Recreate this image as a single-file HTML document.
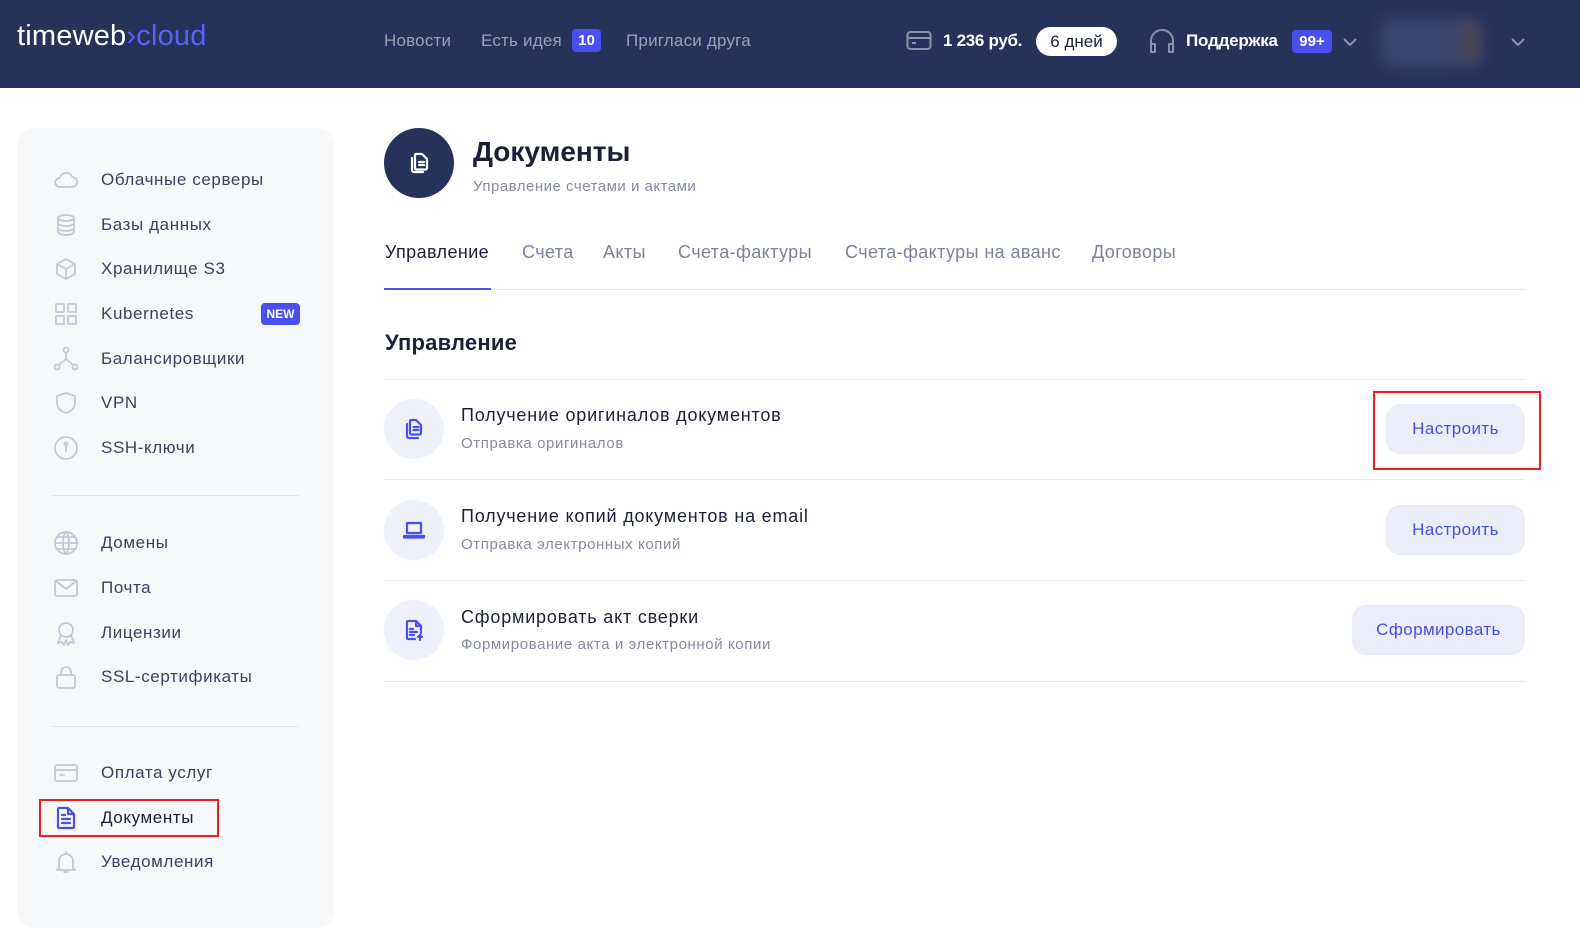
<!DOCTYPE html>
<html><head><meta charset="utf-8"><style>
*{margin:0;padding:0;box-sizing:border-box}
body{width:1580px;height:901px;overflow:hidden;background:#fff;font-family:"Liberation Sans",sans-serif;position:relative;color:#1c2036}
.abs{position:absolute}
.hdr{left:0;top:0;width:1580px;height:88px;background:#27325b}
.nav{color:#9aa0b8;font-size:17px;top:31px;letter-spacing:0.2px}
.badge{background:#4a50f0;color:#fff;border-radius:4px;font-weight:bold;font-size:15px;text-align:center}
.side{left:17px;top:128px;width:317px;height:800px;background:#f7f8fa;border-radius:18px}
.item{left:101px;font-size:17px;color:#3c4260;letter-spacing:0.6px}
.ic{left:53px;width:26px;height:26px}
.ic svg{width:26px;height:26px;fill:none;stroke:#c4c8d6;stroke-width:1.8;stroke-linecap:round;stroke-linejoin:round}
.div{left:52px;width:247px;height:1px;background:#e3e5ec}
.tab{top:242px;font-size:18px;color:#7c8299;letter-spacing:0.4px}
.hl{left:384px;width:1141px;height:1px;background:#e6e8ee}
.rc{left:384px;width:60px;height:60px;border-radius:50%;background:#eef0fb}
.rc svg{position:absolute;left:18px;top:18px;width:24px;height:24px;fill:none;stroke:#4a50f0;stroke-width:2.2;stroke-linecap:round;stroke-linejoin:round}
.rt{left:461px;font-size:18px;color:#1c2036;letter-spacing:0.8px}
.rs{left:461px;font-size:15px;color:#858aa0;letter-spacing:0.6px}
.btn{height:50px;border-radius:14px;background:#ebedfb;color:#4450e0;font-size:17px;text-align:center;line-height:50px;letter-spacing:0.4px}
.red{border:2px solid #ee1c24}
</style></head><body>
<div class="abs hdr"></div>
<div class="abs" style="left:17px;top:20px;font-size:29px;color:#fff;letter-spacing:0.2px">timeweb<span style="color:#5a62f6">›cloud</span></div>
<div class="abs nav" style="left:384px">Новости</div>
<div class="abs nav" style="left:481px">Есть идея</div>
<div class="abs badge" style="left:572px;top:29px;width:29px;height:23px;line-height:23px">10</div>
<div class="abs nav" style="left:626px">Пригласи друга</div>
<svg class="abs" style="left:906px;top:30px" width="26" height="22" viewBox="0 0 26 22"><rect x="1.5" y="2" width="23" height="17" rx="3" fill="none" stroke="#8a91ad" stroke-width="2"/><line x1="2" y1="8" x2="24" y2="8" stroke="#8a91ad" stroke-width="2"/><line x1="6" y1="13" x2="10" y2="13" stroke="#8a91ad" stroke-width="2"/></svg>
<div class="abs" style="left:943px;top:31px;color:#fff;font-size:17px;font-weight:bold;letter-spacing:-0.3px">1 236 руб.</div>
<div class="abs" style="left:1036px;top:27px;width:81px;height:29px;border-radius:15px;background:#fff;color:#1c2036;font-size:17px;text-align:center;line-height:29px">6 дней</div>
<svg class="abs" style="left:1148px;top:28px" width="28" height="26" viewBox="0 0 28 26"><path d="M3 22V13a11 11 0 0 1 22 0v9M3 16h4v8H3zM21 16h4v8h-4z" fill="none" stroke="#8a91ad" stroke-width="2" stroke-linejoin="round"/></svg>
<div class="abs" style="left:1186px;top:31px;color:#fff;font-size:17px;font-weight:bold;letter-spacing:-0.2px">Поддержка</div>
<div class="abs badge" style="left:1292px;top:30px;width:40px;height:23px;line-height:23px">99+</div>
<svg class="abs" style="left:1342px;top:37px" width="16" height="10"><path d="M2 2l6 6 6-6" fill="none" stroke="#8a91ad" stroke-width="2"/></svg>
<div class="abs" style="left:1380px;top:18px;width:100px;height:50px;background:#3a4670;filter:blur(8px);border-radius:10px"></div>
<div class="abs" style="left:1460px;top:22px;width:20px;height:40px;background:#4a4350;filter:blur(6px)"></div>
<svg class="abs" style="left:1510px;top:37px" width="16" height="10"><path d="M2 2l6 6 6-6" fill="none" stroke="#8a91ad" stroke-width="2"/></svg>

<div class="abs side"></div>
<div class="abs ic" style="top:167px"><svg viewBox="0 0 26 26"><path d="M7 20h12a5 5 0 0 0 .5-10A7 7 0 0 0 6.5 11 4.5 4.5 0 0 0 7 20z"/></svg></div>
<div class="abs item" style="top:170px">Облачные серверы</div>
<div class="abs ic" style="top:212px"><svg viewBox="0 0 26 26"><ellipse cx="13" cy="6" rx="8" ry="3"/><path d="M5 6v14c0 1.7 3.6 3 8 3s8-1.3 8-3V6M5 11c0 1.7 3.6 3 8 3s8-1.3 8-3M5 16c0 1.7 3.6 3 8 3s8-1.3 8-3"/></svg></div>
<div class="abs item" style="top:215px">Базы данных</div>
<div class="abs ic" style="top:256px"><svg viewBox="0 0 26 26"><path d="M13 3l9 5v10l-9 5-9-5V8zM4 8l9 5 9-5M13 13v10"/></svg></div>
<div class="abs item" style="top:259px">Хранилище S3</div>
<div class="abs ic" style="top:301px"><svg viewBox="0 0 26 26"><rect x="3" y="3" width="8" height="8"/><rect x="15" y="3" width="8" height="8"/><rect x="3" y="15" width="8" height="8"/><rect x="15" y="15" width="8" height="8"/></svg></div>
<div class="abs item" style="top:304px">Kubernetes</div>
<div class="abs badge" style="left:261px;top:303px;width:39px;height:22px;line-height:22px;font-size:12px">NEW</div>
<div class="abs ic" style="top:346px"><svg viewBox="0 0 26 26"><circle cx="13" cy="4" r="2.5"/><circle cx="4" cy="21" r="2.5"/><circle cx="22" cy="21" r="2.5"/><path d="M13 6.5V13l-7 6M13 13l7 6"/></svg></div>
<div class="abs item" style="top:349px">Балансировщики</div>
<div class="abs ic" style="top:390px"><svg viewBox="0 0 26 26"><path d="M13 3l9 3v7c0 5-4 8.5-9 10-5-1.5-9-5-9-10V6z"/></svg></div>
<div class="abs item" style="top:393px">VPN</div>
<div class="abs ic" style="top:435px"><svg viewBox="0 0 26 26"><circle cx="13" cy="13" r="11"/><path d="M13 10v6"/><circle cx="13" cy="9" r="1.5"/></svg></div>
<div class="abs item" style="top:438px">SSH-ключи</div>
<div class="abs div" style="top:495px"></div>
<div class="abs ic" style="top:530px"><svg viewBox="0 0 26 26"><circle cx="13" cy="13" r="11"/><path d="M2 13h22M13 2c-4 4-4 18 0 22M13 2c4 4 4 18 0 22M4 7h18M4 19h18"/></svg></div>
<div class="abs item" style="top:533px">Домены</div>
<div class="abs ic" style="top:575px"><svg viewBox="0 0 26 26"><rect x="2" y="5" width="22" height="16" rx="2"/><path d="M3 6l10 8 10-8"/></svg></div>
<div class="abs item" style="top:578px">Почта</div>
<div class="abs ic" style="top:620px"><svg viewBox="0 0 26 26"><circle cx="13" cy="10" r="7"/><path d="M8 15l-3 8 4-1 2 3 2-5 2 5 2-3 4 1-3-8"/></svg></div>
<div class="abs item" style="top:623px">Лицензии</div>
<div class="abs ic" style="top:664px"><svg viewBox="0 0 26 26"><rect x="4" y="11" width="18" height="13" rx="2"/><path d="M8 11V8a5 5 0 0 1 10 0v3"/></svg></div>
<div class="abs item" style="top:667px">SSL-сертификаты</div>
<div class="abs div" style="top:726px"></div>
<div class="abs ic" style="top:760px"><svg viewBox="0 0 26 26"><rect x="2" y="5" width="22" height="16" rx="2"/><path d="M3 10h20M7 15h4"/></svg></div>
<div class="abs item" style="top:763px">Оплата услуг</div>
<div class="abs ic" style="top:805px"><svg viewBox="0 0 26 26" style="stroke:#4a50f0;stroke-width:2.2"><path d="M6 3h9l6 6v13a1 1 0 0 1-1 1H6a1 1 0 0 1-1-1V4a1 1 0 0 1 1-1zM15 3v6h6M9 14h8M9 18h8M9 10h3"/></svg></div>
<div class="abs item" style="top:808px;color:#1c2036">Документы</div>
<div class="abs red" style="left:39px;top:799px;width:180px;height:38px"></div>
<div class="abs ic" style="top:849px"><svg viewBox="0 0 26 26"><path d="M6 19V12a7 7 0 0 1 14 0v7l2 2H4zM11 23h4M13 3v2"/></svg></div>
<div class="abs item" style="top:852px">Уведомления</div>

<div class="abs" style="left:384px;top:128px;width:70px;height:70px;border-radius:50%;background:#27325b"></div>
<svg class="abs" style="left:406px;top:150px" width="26" height="26" viewBox="0 0 26 26"><path d="M10 4h6l5 5v9a1.5 1.5 0 0 1-1.5 1.5h-9A1.5 1.5 0 0 1 9 18V5a1 1 0 0 1 1-1zM13 12h5M13 15h5M6 8v12a2 2 0 0 0 2 2h9" fill="none" stroke="#fff" stroke-width="2.2" stroke-linecap="round"/></svg>
<div class="abs" style="left:473px;top:136px;font-size:28px;font-weight:bold;color:#1c2036;letter-spacing:0px">Документы</div>
<div class="abs" style="left:473px;top:178px;font-size:15px;color:#858aa0;letter-spacing:0.5px">Управление счетами и актами</div>
<div class="abs tab" style="left:385px;color:#1c2036">Управление</div>
<div class="abs tab" style="left:522px">Счета</div>
<div class="abs tab" style="left:603px">Акты</div>
<div class="abs tab" style="left:678px">Счета-фактуры</div>
<div class="abs tab" style="left:845px">Счета-фактуры на аванс</div>
<div class="abs tab" style="left:1092px">Договоры</div>
<div class="abs hl" style="top:289px"></div>
<div class="abs" style="left:384px;top:288px;width:107px;height:2px;background:#4a50f0"></div>
<div class="abs" style="left:385px;top:330px;font-size:22px;font-weight:bold;color:#1c2036;letter-spacing:0.2px">Управление</div>
<div class="abs hl" style="top:379px"></div>
<div class="abs hl" style="top:479px"></div>
<div class="abs hl" style="top:580px"></div>
<div class="abs hl" style="top:681px"></div>

<div class="abs rc" style="top:399px"><svg viewBox="0 0 24 24"><path d="M9 3h5l5 5v8a1.5 1.5 0 0 1-1.5 1.5h-8A1.5 1.5 0 0 1 8 16V4a1 1 0 0 1 1-1zM11.5 10h5M11.5 13h5M5 7v12a2 2 0 0 0 2 2h9"/></svg></div>
<div class="abs rt" style="top:405px">Получение оригиналов документов</div>
<div class="abs rs" style="top:435px">Отправка оригиналов</div>
<div class="abs btn" style="left:1386px;top:404px;width:139px">Настроить</div>
<div class="abs red" style="left:1373px;top:391px;width:168px;height:79px"></div>

<div class="abs rc" style="top:500px"><svg viewBox="0 0 24 24"><path d="M5 5h14v10H5zM2 18h20v1.5H2z"/></svg></div>
<div class="abs rt" style="top:506px">Получение копий документов на email</div>
<div class="abs rs" style="top:536px">Отправка электронных копий</div>
<div class="abs btn" style="left:1386px;top:505px;width:139px">Настроить</div>

<div class="abs rc" style="top:600px"><svg viewBox="0 0 24 24"><path d="M13 21H6a1 1 0 0 1-1-1V4a1 1 0 0 1 1-1h8l5 5v7M14 3v5h5M8 11h3M8 14h7M8 17h4M18 22v-5M16 19l2-2 2 2"/></svg></div>
<div class="abs rt" style="top:607px">Сформировать акт сверки</div>
<div class="abs rs" style="top:636px">Формирование акта и электронной копии</div>
<div class="abs btn" style="left:1352px;top:605px;width:173px">Сформировать</div>
</body></html>
